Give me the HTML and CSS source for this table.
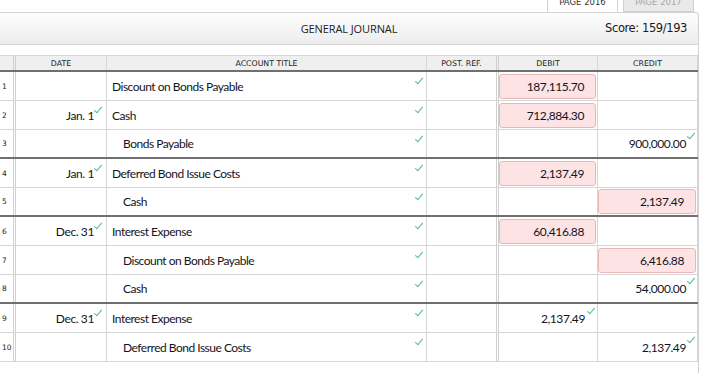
FILE: index.html
```html
<!DOCTYPE html>
<html>
<head>
<meta charset="utf-8">
<link rel="stylesheet" href="styles.css">
</head>
<body>
<div class="tabs">
  <div class="tab active">PAGE 2016</div>
  <div class="tab">PAGE 2017</div>
</div>
<div class="panel">
  <div class="bar">
    <div class="title">GENERAL JOURNAL</div>
    <div class="score">Score: 159/193</div>
  </div>
  <div class="journal">
    <div class="row head">
      <div class="c num"></div>
      <div class="c date">DATE</div>
      <div class="c acct">ACCOUNT TITLE</div>
      <div class="c post">POST. REF.</div>
      <div class="c amt">DEBIT</div>
      <div class="c amt cr">CREDIT</div>
    </div>

    <div class="row">
      <div class="c num">1</div>
      <div class="c date"></div>
      <div class="c acct">Discount on Bonds Payable<span class="chk"></span></div>
      <div class="c post"></div>
      <div class="c amt"><div class="box">187,115.70</div></div>
      <div class="c amt cr"></div>
    </div>
    <div class="row">
      <div class="c num">2</div>
      <div class="c date">Jan. 1<span class="chk"></span></div>
      <div class="c acct">Cash<span class="chk"></span></div>
      <div class="c post"></div>
      <div class="c amt"><div class="box">712,884.30</div></div>
      <div class="c amt cr"></div>
    </div>
    <div class="row end">
      <div class="c num">3</div>
      <div class="c date"></div>
      <div class="c acct ind">Bonds Payable<span class="chk"></span></div>
      <div class="c post"></div>
      <div class="c amt"></div>
      <div class="c amt cr"><div class="val">900,000.00<span class="chk"></span></div></div>
    </div>

    <div class="row">
      <div class="c num">4</div>
      <div class="c date">Jan. 1<span class="chk"></span></div>
      <div class="c acct">Deferred Bond Issue Costs<span class="chk"></span></div>
      <div class="c post"></div>
      <div class="c amt"><div class="box">2,137.49</div></div>
      <div class="c amt cr"></div>
    </div>
    <div class="row end">
      <div class="c num">5</div>
      <div class="c date"></div>
      <div class="c acct ind">Cash<span class="chk"></span></div>
      <div class="c post"></div>
      <div class="c amt"></div>
      <div class="c amt cr"><div class="box">2,137.49</div></div>
    </div>

    <div class="row">
      <div class="c num">6</div>
      <div class="c date">Dec. 31<span class="chk"></span></div>
      <div class="c acct">Interest Expense<span class="chk"></span></div>
      <div class="c post"></div>
      <div class="c amt"><div class="box">60,416.88</div></div>
      <div class="c amt cr"></div>
    </div>
    <div class="row">
      <div class="c num">7</div>
      <div class="c date"></div>
      <div class="c acct ind">Discount on Bonds Payable<span class="chk"></span></div>
      <div class="c post"></div>
      <div class="c amt"></div>
      <div class="c amt cr"><div class="box">6,416.88</div></div>
    </div>
    <div class="row end">
      <div class="c num">8</div>
      <div class="c date"></div>
      <div class="c acct ind">Cash<span class="chk"></span></div>
      <div class="c post"></div>
      <div class="c amt"></div>
      <div class="c amt cr"><div class="val">54,000.00<span class="chk"></span></div></div>
    </div>

    <div class="row">
      <div class="c num">9</div>
      <div class="c date">Dec. 31<span class="chk"></span></div>
      <div class="c acct">Interest Expense<span class="chk"></span></div>
      <div class="c post"></div>
      <div class="c amt"><div class="val">2,137.49<span class="chk"></span></div></div>
      <div class="c amt cr"></div>
    </div>
    <div class="row">
      <div class="c num">10</div>
      <div class="c date"></div>
      <div class="c acct ind">Deferred Bond Issue Costs<span class="chk"></span></div>
      <div class="c post"></div>
      <div class="c amt"></div>
      <div class="c amt cr"><div class="val">2,137.49<span class="chk"></span></div></div>
    </div>
  </div>
</div>
</body>
</html>
```
FILE: styles.css
```css
html, body {
  margin: 0;
  padding: 0;
  background: #ffffff;
  overflow: hidden;
  width: 712px;
  height: 373px;
}
body {
  font-family: "Lato", "Liberation Sans", sans-serif;
  color: #14141e;
}
.tabs {
  display: flex;
  justify-content: flex-end;
  gap: 5px;
  padding-right: 18px;
  height: 12px;
  overflow: hidden;
}
.tab {
  box-sizing: border-box;
  width: 71px;
  height: 19px;
  margin-top: -7px;
  border: 1px solid #d0d0d0;
  background: #e9e9e9;
  color: #a9a9a9;
  font-family: "DejaVu Sans", sans-serif;
  font-size: 8.5px;
  line-height: 16px;
  text-align: center;
}
.tab.active {
  background: #ffffff;
  color: #333333;
  border-bottom-color: #ffffff;
}
.panel {
  width: 698px;
  height: 360px;
  border: 1px solid #d2d2d2;
  border-left: none;
  border-bottom: none;
  border-top-right-radius: 4px;
  background: #ffffff;
}
.bar {
  position: relative;
  height: 31px;
  border-bottom: 1px solid #d6d6d6;
  background: linear-gradient(#fdfdfd, #ededed);
  display: flex;
  align-items: center;
  justify-content: center;
  font-family: "Open Sans", sans-serif;
  font-size: 11px;
  color: #222222;
  border-top-right-radius: 4px;
}
.title {
  letter-spacing: -0.1px;
}
.score {
  position: absolute;
  right: 11px;
  top: 0;
  line-height: 31px;
  font-size: 11.5px;
  font-family: "DejaVu Sans", sans-serif;
  letter-spacing: -0.4px;
  color: #1a1a1a;
}
.journal {
  margin-top: 10px;
}
.row {
  display: grid;
  grid-template-columns: 16px 91px 320px 72px 99px 100px;
  height: 29px;
  box-sizing: border-box;
  border-bottom: 1px solid #d6d6d6;
  font-size: 12px;
}
.row.end {
  border-bottom: 2px solid #6f6f6f;
}
.row.head {
  height: 17px;
  border-top: 1px solid #d6d6d6;
  border-bottom: 2px solid #6f6f6f;
  background: #efefef;
  font-family: "DejaVu Sans", sans-serif;
  font-size: 7.8px;
  color: #1a1a1a;
  letter-spacing: 0;
}
.row.head .c {
  justify-content: center;
  padding: 0;
  letter-spacing: 0;
}
.c {
  position: relative;
  box-sizing: border-box;
  border-right: 1px solid #d6d6d6;
  display: flex;
  align-items: center;
  min-width: 0;
  white-space: nowrap;
}
.num {
  border-right: 3px double #cfcfcf;
  font-size: 7.5px;
  font-family: "DejaVu Sans", sans-serif;
  padding-left: 2px;
  color: #222;
}
.date {
  justify-content: flex-end;
  padding-right: 12px;
  letter-spacing: -0.4px;
}
.acct {
  padding-left: 5px;
  letter-spacing: -0.5px;
}
.acct.ind {
  padding-left: 16px;
}
.post {
  border-right: 3px double #cfcfcf;
}
.amt {
  justify-content: flex-end;
  letter-spacing: -0.4px;
}
.box {
  box-sizing: border-box;
  width: 99px;
  height: 25px;
  margin-right: 1px;
  border: 1px solid #e6b9b9;
  border-radius: 3px;
  background: #fde3e3;
  display: flex;
  align-items: center;
  justify-content: flex-end;
  padding-right: 11px;
}
.cr .box {
  width: 98px;
  margin-right: 1px;
}
.val {
  position: relative;
  padding-right: 12px;
}
.cr .val {
  padding-right: 11px;
}
.chk {
  position: absolute;
  top: 4px;
  right: 3px;
  width: 3px;
  height: 7px;
  border-right: 1.5px solid #55b78a;
  border-bottom: 1.5px solid #55b78a;
  transform: rotate(40deg);
}
.acct .chk {
  right: 5px;
}
.date .chk {
  right: 6px;
}
.val .chk {
  top: -5px;
  right: 4px;
}
```
